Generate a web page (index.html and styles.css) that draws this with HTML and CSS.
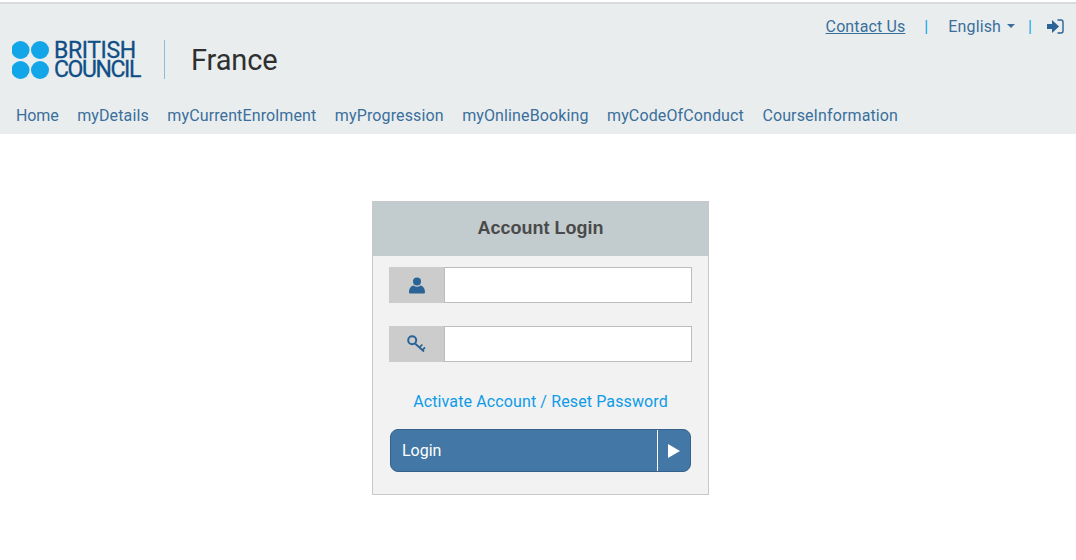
FILE: index.html
```html
<!DOCTYPE html>
<html lang="en">
<head>
<meta charset="utf-8">
<title>Account Login</title>
<link rel="stylesheet" href="styles.css">
</head>
<body>
<header class="header">
  <div class="top-links">
    <a class="contact" href="#">Contact Us</a>
    <span class="sep sep-a">|</span>
    <a class="lang" href="#">English <span class="caret"></span></a>
    <span class="sep sep-b">|</span>
    <a class="signin" href="#" aria-label="Sign in">
      <svg width="17" height="15" viewBox="0 0 17 15"><path d="M0 5h5V1l7 6.500-7 6.500v-4H0z" fill="#2a6496"/><path d="M10.500 1H14a2 2 0 0 1 2 2v9a2 2 0 0 1-2 2h-3.500" fill="none" stroke="#2a6496" stroke-width="1.400"/></svg>
    </a>
  </div>
  <div class="brand">
    <div class="logo">
      <svg class="dots" width="37" height="38" viewBox="0 0 37 38"><g fill="#12a5e8"><circle cx="8.500" cy="9" r="9"/><circle cx="28" cy="9" r="9"/><circle cx="8.500" cy="29" r="9"/><circle cx="28" cy="29" r="9"/></g></svg>
      <div class="wordmark"><span class="word-top">BRITISH</span><span class="word-bottom">COUNCIL</span></div>
    </div>
    <div class="country">France</div>
  </div>
  <nav class="nav">
    <a href="#">Home</a>
    <a href="#">myDetails</a>
    <a href="#">myCurrentEnrolment</a>
    <a href="#">myProgression</a>
    <a href="#">myOnlineBooking</a>
    <a href="#">myCodeOfConduct</a>
    <a href="#">CourseInformation</a>
  </nav>
</header>
<main class="main">
  <section class="panel">
    <h1 class="panel-title">Account Login</h1>
    <div class="panel-body">
      <div class="field">
        <span class="addon">
          <svg width="16" height="17" viewBox="0 0 16 17"><circle cx="8" cy="4.500" r="4" fill="#2a6496"/><path d="M1 16.500c-.8 0-1-.5-1-1.200C0 11.500 2 9 4.500 8.500c1 .9 2.200 1.300 3.500 1.300s2.500-.4 3.500-1.300C14 9 16 11.500 16 15.300c0 .7-.2 1.200-1 1.200z" fill="#2a6496"/></svg>
        </span>
        <input class="input" type="text" aria-label="Username">
      </div>
      <div class="field">
        <span class="addon">
          <svg width="19" height="18" viewBox="0 0 19 18"><circle cx="5.200" cy="5.200" r="4" fill="none" stroke="#2a6496" stroke-width="2"/><path d="M8 8.500l9 8M12.500 12.500l2.800-3M15.500 15l2.500-2.600" fill="none" stroke="#2a6496" stroke-width="1.800"/></svg>
        </span>
        <input class="input" type="password" aria-label="Password">
      </div>
      <a class="activate" href="#">Activate Account / Reset Password</a>
      <button class="login" type="button">
        <span class="login-label">Login</span>
        <span class="login-arrow"></span>
      </button>
    </div>
  </section>
</main>
</body>
</html>
```
FILE: styles.css
```css
* { box-sizing: border-box; }
html, body { margin: 0; padding: 0; }
body {
  background: #fff;
  font-family: Roboto, sans-serif;
  font-size: 16px;
  letter-spacing: 0.12px;
  color: #333;
  padding-top: 2px;
}
a { text-decoration: none; color: #337ab7; }
.header {
  position: relative;
  height: 132px;
  background: #e9edee;
  border-top: 2px solid #d9dcdd;
}
.top-links {
  position: absolute;
  top: 10px;
  right: 12px;
  display: flex;
  align-items: center;
  height: 24px;
  font-size: 16px;
}
.contact { text-decoration: underline; color: #3a6f9c; }
.lang { color: #3a6f9c; display: flex; align-items: center; gap: 6px; }
.caret {
  width: 0; height: 0;
  border-left: 4px solid transparent;
  border-right: 4px solid transparent;
  border-top: 4px solid #3a6f9c;
}
.sep { color: #12a5e8; }
.sep-a { margin: 0 20px 0 19px; }
.sep-b { margin: 0 15px 0 13px; }
.signin { display: flex; }
.brand {
  display: flex;
  align-items: center;
  padding: 36px 0 0 12px;
}
.logo {
  display: flex;
  align-items: center;
  gap: 5px;
  height: 39px;
  padding-right: 24px;
  border-right: 1px solid #8fbcd8;
}
.dots { display: block; }
.wordmark {
  display: flex;
  flex-direction: column;
  font-size: 23px;
  line-height: 19px;
  font-weight: 400;
  color: #0f4f86;
  -webkit-text-stroke: 0.3px #0f4f86;
}
.word-top { letter-spacing: -0.4px; }
.word-bottom { letter-spacing: -1.4px; }
.country {
  margin-left: 26px;
  font-size: 29px;
  line-height: 36px;
  letter-spacing: -0.1px;
  color: #2f2f2f;
}
.nav {
  display: flex;
  gap: 18.5px;
  padding: 25px 0 0 16px;
  font-size: 16px;
  line-height: 24px;
}
.nav a { color: #3a6f9c; }
.nav a:first-child { letter-spacing: -0.1px; }
.main { display: flex; justify-content: center; padding: 67px 0 0 5px; }
.panel {
  width: 337px;
  height: 294px;
  background: #f2f2f2;
  border: 1px solid #c8c8c8;
}
.panel-title {
  margin: 0;
  height: 54px;
  background: #c2cbce;
  text-align: center;
  font-family: "Liberation Sans", sans-serif;
  font-size: 18px;
  font-weight: 700;
  letter-spacing: 0;
  line-height: 52px;
  color: #4a4a4a;
}
.panel-body {
  display: flex;
  flex-direction: column;
  padding: 11px 16px 0 16px;
}
.field { display: flex; height: 36px; margin-bottom: 23px; }
.addon {
  flex: 0 0 55px;
  display: flex;
  align-items: center;
  justify-content: center;
  background: #cccccc;
}
.input {
  flex: 1;
  min-width: 0;
  background: #fff;
  border: 1px solid #bdbdbd;
  padding: 0;
  outline: none;
}
.activate {
  margin-top: 5px;
  text-align: center;
  font-size: 16px;
  line-height: 24px;
  color: #0d9be8;
}
.login {
  display: flex;
  align-items: stretch;
  height: 43px;
  margin: 15px 1px 0 1px;
  padding: 0;
  background: #4277a6;
  border: 1px solid #35618a;
  border-radius: 8px;
  color: #fff;
  font-family: Roboto, sans-serif;
  font-size: 16px;
}
.login-label {
  flex: 1;
  text-align: left;
  padding-left: 11px;
  line-height: 41px;
}
.login-arrow {
  flex: 0 0 33px;
  border-left: 1px solid #fff;
  display: flex;
  align-items: center;
  justify-content: center;
}
.login-arrow::before {
  content: "";
  width: 0; height: 0;
  border-left: 12px solid #fff;
  border-top: 7px solid transparent;
  border-bottom: 7px solid transparent;
}
```
